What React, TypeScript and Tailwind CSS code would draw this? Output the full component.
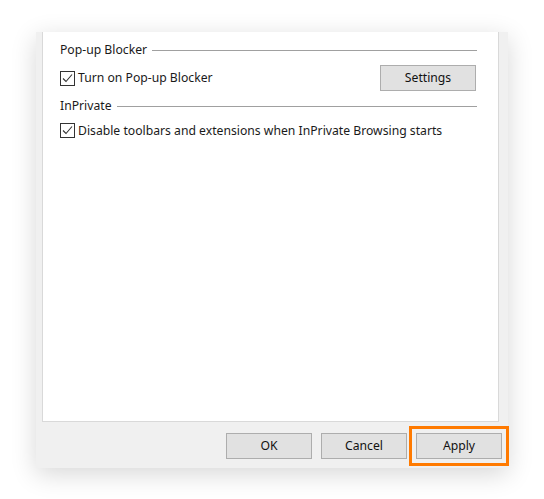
const font = { fontFamily: '"Noto Sans", "Open Sans", sans-serif' };

const CheckBox = () => (
  <span className="flex h-[15px] w-[15px] shrink-0 items-center justify-center border border-[#333333] bg-white">
    <svg width="13" height="13" viewBox="0 0 13 13">
      <path d="M2 6.5 L5 9.5 L11 2.5" fill="none" stroke="#333333" strokeWidth="1.1" />
    </svg>
  </span>
);

const GroupTitle = ({ label }: { label: string }) => (
  <div className="flex items-center gap-[5px] pr-[21px]">
    <span>{label}</span>
    <div className="h-px flex-1 bg-[#a0a0a0]" />
  </div>
);

const WinButton = ({ label, className = "" }: { label: string; className?: string }) => (
  <button
    className={`flex h-[26px] items-center justify-center border border-[#adadad] bg-[#e1e1e1] text-[12.2px] text-[#111] ${className}`}
  >
    {label}
  </button>
);

export default function App() {
  return (
    <div className="h-[499px] w-[544px] overflow-hidden bg-white pl-[36px] pt-[32px]" style={font}>
      <div className="flex h-[436px] w-[472px] flex-col bg-[#f0f0f0] shadow-[0_6px_24px_rgba(0,0,0,0.16)]">
        <div className="ml-[6px] mr-[9px] h-[390px] border-x border-b border-[#d9d9d9] bg-white pl-[17px] text-[12.2px] text-[#1a1a1a]">
          <div className="pt-[9px]">
            <GroupTitle label="Pop-up Blocker" />
          </div>
          <div className="mt-[6px] flex h-[26px] items-center pr-[22px]">
            <CheckBox />
            <span className="ml-[3px] flex-1">Turn on Pop-up Blocker</span>
            <WinButton label="Settings" className="w-[96px]" />
          </div>
          <div className="mt-[6px]">
            <GroupTitle label="InPrivate" />
          </div>
          <div className="mt-[6px] flex items-center">
            <CheckBox />
            <span className="ml-[3px]">Disable toolbars and extensions when InPrivate Browsing starts</span>
          </div>
        </div>
        <div className="flex justify-end gap-[9px] pr-[6px] pt-[11px]">
          <WinButton label="OK" className="w-[86px]" />
          <WinButton label="Cancel" className="w-[86px]" />
          <div className="-m-[7px] border-[3px] border-[#ff7a00] p-[4px]">
            <WinButton label="Apply" className="w-[86px]" />
          </div>
        </div>
      </div>
    </div>
  );
}
